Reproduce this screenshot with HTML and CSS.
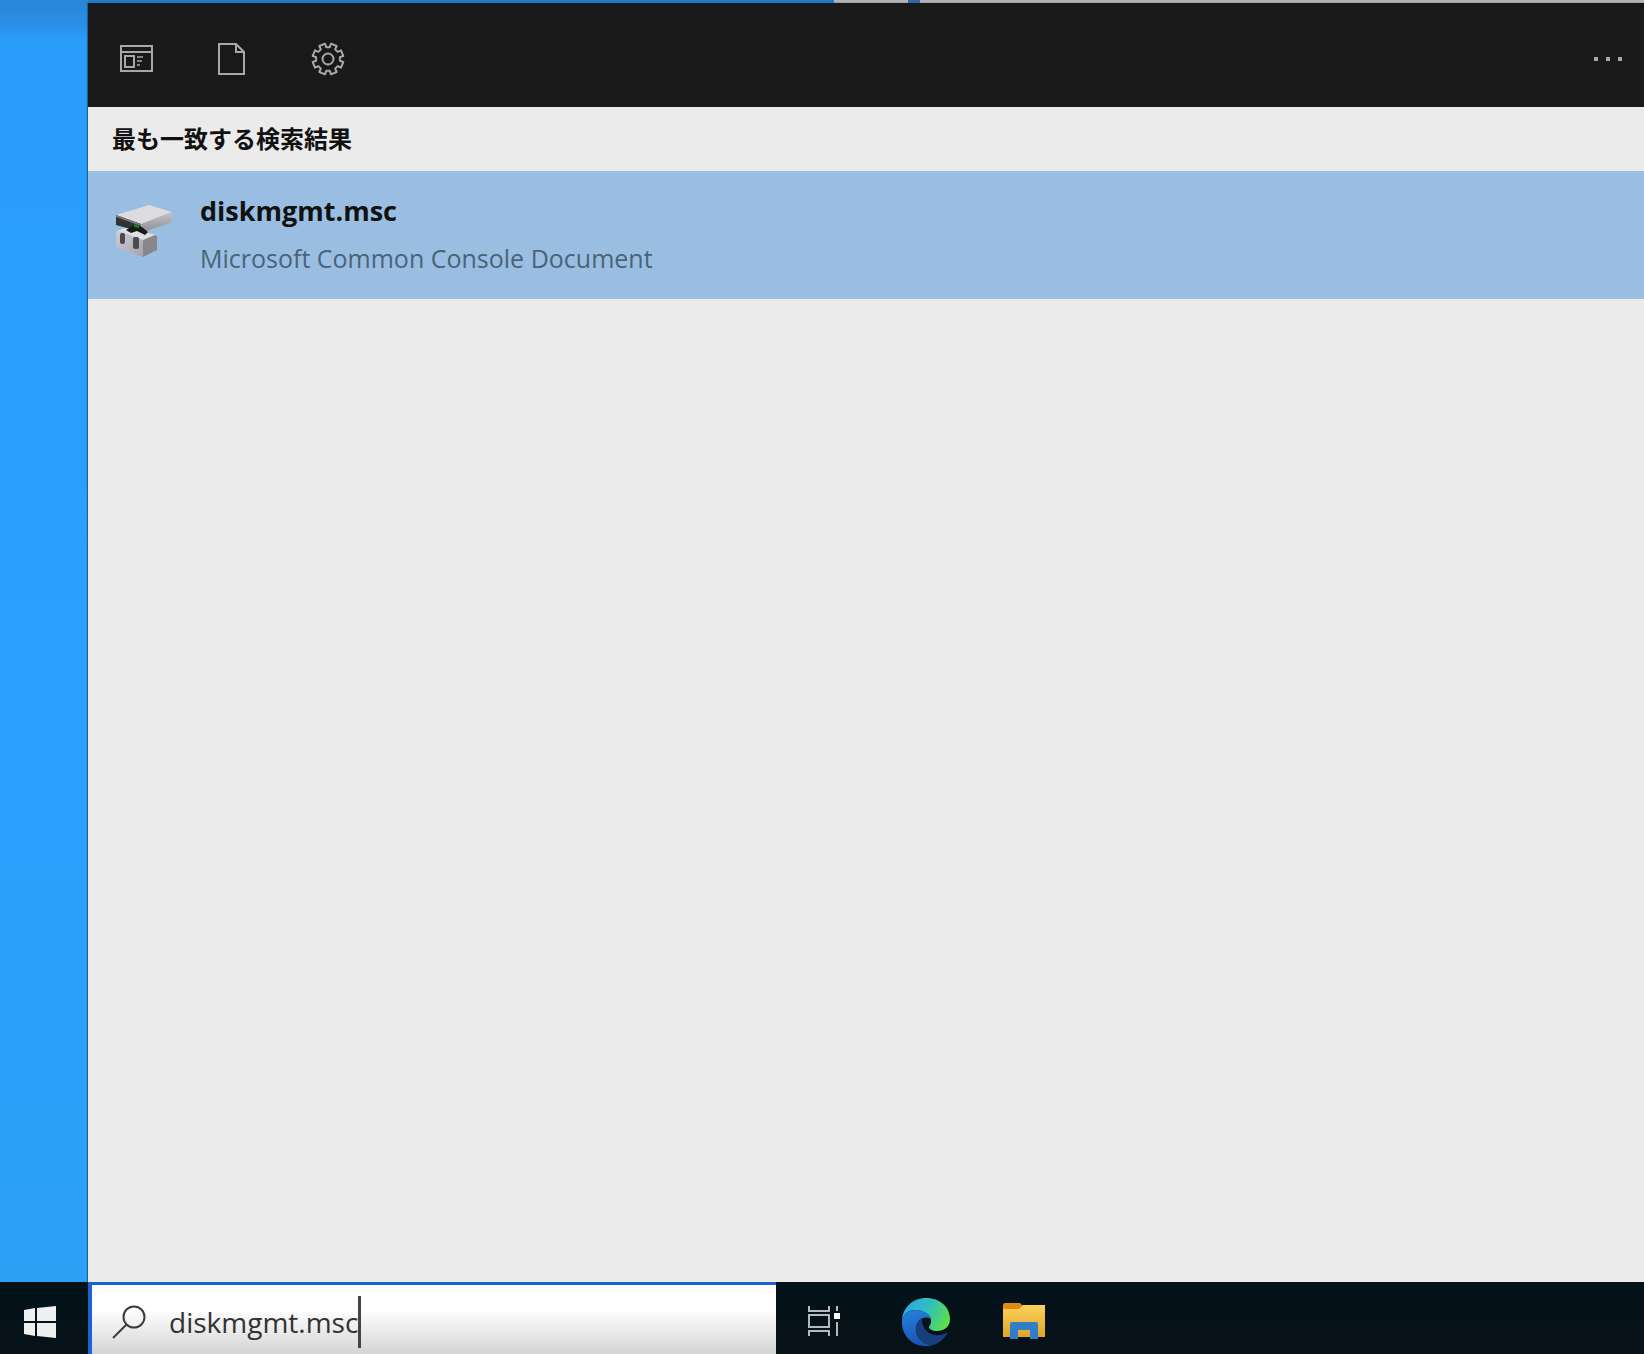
FILE: index.html
```
<!DOCTYPE html>
<html lang="ja">
<head>
    <meta charset="UTF-8">
    <meta name="viewport" content="width=device-width, initial-scale=1.0">
    <title>diskmgmt.msc</title>
    <link rel="stylesheet" href="styles.css">
</head>
<body>
    <div class="desktop">
        <div class="window-edge">
            <span class="edge-wallpaper"></span>
            <span class="edge-tab"></span>
            <span class="edge-gap"></span>
            <span class="edge-title"></span>
        </div>
        <main class="search-panel">
            <header class="filters">
                <button class="filter" type="button" aria-label="アプリ">
                    <svg width="34" height="34" viewBox="0 0 34 34" fill="none" stroke="#a8a8a8" stroke-width="2">
                        <path d="M2 4h31v25H2zM2 10h31"/>
                        <path d="M6 14h9v11H6z"/>
                        <path d="M18 15h6M18 19h5M18 23h3" stroke-width="1.6"/>
                    </svg>
                </button>
                <button class="filter" type="button" aria-label="ドキュメント">
                    <svg width="34" height="34" viewBox="0 0 34 34" fill="none" stroke="#a8a8a8" stroke-width="2">
                        <path d="M4 2h17l8 8v22H4z"/>
                        <path d="M21 2v8h8"/>
                    </svg>
                </button>
                <button class="filter" type="button" aria-label="設定">
                    <svg width="34" height="34" viewBox="-17 -17 34 34" fill="none" stroke="#a8a8a8" stroke-width="2">
                        <circle r="5.5"/>
                        <path id="gear" stroke-linejoin="round"/>
                    </svg>
                </button>
                <button class="more" type="button" aria-label="その他">
                    <svg width="30" height="6" viewBox="0 0 30 6" fill="#a8a8a8">
                        <path d="M1 1h4v4H1zM13 1h4v4h-4zM25 1h4v4h-4z"/>
                    </svg>
                </button>
            </header>
            <h2 class="group-title">最も一致する検索結果</h2>
            <button class="result" type="button">
                <svg class="result-icon" width="60" height="64" viewBox="0 0 60 64">
                    <defs>
                        <linearGradient id="side" x1="0" y1="0" x2="0" y2="1">
                            <stop offset="0" stop-color="#c6c6c8"/>
                            <stop offset="1" stop-color="#8e8e92"/>
                        </linearGradient>
                        <linearGradient id="box" x1="0" y1="0" x2="1" y2="1">
                            <stop offset="0" stop-color="#d0ced5"/>
                            <stop offset="1" stop-color="#a5a2ac"/>
                        </linearGradient>
                    </defs>
                    <path d="M2 12 35 2l23 7-31 13z" fill="#dcdce0"/>
                    <path d="M27 21 57 9q1 0 1 2v7q0 1-2 2L29 29z" fill="url(#side)"/>
                    <path d="M2 12l25 9v8L2 22z" fill="#303433"/>
                    <path d="M2 12l25 9v2L2 14z" fill="#77797a"/>
                    <path d="M3 28l8-3 32 7-14 6z" fill="#e0e0e3"/>
                    <path d="M2 30q0-3 3-2l24 9v17L2 44z" fill="url(#box)"/>
                    <path d="M29 37l12-5q2 0 2 2v13L29 54z" fill="#88888c"/>
                    <path d="M12 27l8-5 8 2 6 5-3 3-8-4-6 2z" fill="#171b19"/>
                    <path d="M20 21l5 1v3l-5-1z" fill="#1d7b24"/>
                    <rect x="6" y="30" width="5" height="11" rx="2" fill="#4a4b50"/>
                    <rect x="19" y="34" width="6" height="12" rx="2" fill="#4a4b50"/>
                </svg>
                <span class="result-text">
                    <strong class="result-name">diskmgmt.msc</strong>
                    <span class="result-type">Microsoft Common Console Document</span>
                </span>
            </button>
        </main>
    </div>

    <footer class="taskbar">
        <button class="start" type="button" aria-label="スタート">
            <svg width="34" height="34" viewBox="0 0 34 34" fill="#eef0f0">
                <path d="M1 5l11-2v13H1zM14 3l19-2v15H14zM1 18h11v13L1 29zM14 18h19v15l-19-2z"/>
            </svg>
        </button>
        <label class="search-box">
            <svg width="34" height="34" viewBox="0 0 34 34" fill="none" stroke="#3c3c3c" stroke-width="2">
                <circle cx="22" cy="12" r="10.5"/>
                <path d="M14.500 19.500 1 33"/>
            </svg>
            <span class="search-field">
                <input class="search-input" type="text" value="diskmgmt.msc" aria-label="検索">
                <span class="caret"></span>
            </span>
        </label>
        <button class="task" type="button" aria-label="タスク ビュー">
            <svg width="38" height="34" viewBox="0 0 38 34" fill="none" stroke="#b4babd" stroke-width="2">
                <path d="M2 10h20v12H2zM2 1v5h20V1M2 31v-5h20v5M30 1v5M30 17v14"/>
                <path d="M27 8h6v6h-6z" fill="#fff" stroke="none"/>
            </svg>
        </button>
        <button class="task" type="button" aria-label="Microsoft Edge">
            <svg width="50" height="50" viewBox="0 0 50 50">
                <defs>
                    <linearGradient id="edge-top" x1="0" y1="0.300" x2="1" y2="0.600">
                        <stop offset="0" stop-color="#2ba6e8"/>
                        <stop offset="0.500" stop-color="#2fbfc0"/>
                        <stop offset="1" stop-color="#5ddf45"/>
                    </linearGradient>
                    <linearGradient id="edge-body" x1="0" y1="0" x2="0.300" y2="1">
                        <stop offset="0" stop-color="#2483dc"/>
                        <stop offset="1" stop-color="#1b55b4"/>
                    </linearGradient>
                </defs>
                <path d="M1 23C2 10 12 1 25 1c14 0 24 9 24 21 0 8-6 12-13 12-5 0-8-2-8-4 0-1 2-2 2-6C30 17 22 13 14 13 7 13 3 17 1 23z" fill="url(#edge-top)"/>
                <path d="M1 23c2-7 7-10 14-10 8 0 14 4 15 9-6-4-14 0-15 9-1 8 6 16 17 17-3 1-5 1-8 1C11 49 0 38 1 23z" fill="url(#edge-body)"/>
                <path d="M21 21c-5 4-7 9-6 14 2 9 10 14 17 13 6-2 11-6 14-11 1-1 0-2-1-1-12 6-25-1-24-15z" fill="#173f80"/>
            </svg>
        </button>
        <button class="task" type="button" aria-label="エクスプローラー">
            <svg width="48" height="40" viewBox="0 0 48 40">
                <defs>
                    <linearGradient id="folder" x1="0" y1="0" x2="0" y2="1">
                        <stop offset="0" stop-color="#fbd15b"/>
                        <stop offset="1" stop-color="#e2a528"/>
                    </linearGradient>
                </defs>
                <path d="M1 4V3q0-2 2-2h15l3 3v5H1z" fill="#dc8c10"/>
                <path d="M1 7h16l4-4h22v32H1z" fill="url(#folder)"/>
                <path d="M8 37V22q0-2 2-2h24q2 0 2 2v15h-8v-9H16v9z" fill="#2f7dcc"/>
            </svg>
        </button>
    </footer>

    <script>
        // outline of the settings gear
        const teeth = 8;
        const points = [];
        for (let i = 0; i < teeth; i++) {
            [[-0.31, 12], [-0.25, 15.6], [0.25, 15.6], [0.31, 12]].forEach(([offset, radius]) => {
                const angle = (i + 0.5 + offset) * 2 * Math.PI / teeth - Math.PI / 2;
                points.push((radius * Math.cos(angle)).toFixed(2) + ' ' + (radius * Math.sin(angle)).toFixed(2));
            });
        }
        document.getElementById('gear').setAttribute('d', 'M' + points.join('L') + 'Z');
    </script>
</body>
</html>
```

FILE: styles.css
```
* {
    box-sizing: border-box;
}

body {
    margin: 0;
    min-height: 100vh;
    display: flex;
    flex-direction: column;
    font-family: "Open Sans", "Noto Sans CJK JP", sans-serif;
    color: #111;
}

button {
    margin: 0;
    padding: 0;
    border: none;
    background: none;
    font: inherit;
    color: inherit;
    cursor: pointer;
}

svg {
    display: block;
    flex: none;
}

.desktop {
    flex: 1;
    display: flex;
    flex-direction: column;
    padding-left: 88px;
    background: linear-gradient(#2a86d8 0, #2b8ee4 24px, #2a9dfb 40px, #2ba0fd 60%, #2ba0f5 100%);
}

/* bottom of the windows that show above the panel */
.window-edge {
    display: flex;
    height: 3px;
}

.edge-wallpaper {
    flex: 0 0 746px;
    background: #1f7cc6;
}

.edge-tab {
    flex: 0 0 74px;
    background: #b2b2b2;
}

.edge-gap {
    flex: 0 0 12px;
    background: #3268a8;
}

.edge-title {
    flex: 1;
    background: #b2b2b2;
}

.search-panel {
    flex: 1;
    display: flex;
    flex-direction: column;
    background: #ebebeb;
    box-shadow: -1px 0 1px #17639c;
}

.filters {
    display: flex;
    height: 104px;
    background: #191919;
}

.filter,
.more {
    display: flex;
    align-items: center;
    justify-content: center;
    width: 96px;
    padding-top: 8px;
}

.more {
    width: 72px;
    margin-left: auto;
}

.group-title {
    margin: 0;
    padding: 0 24px;
    font-size: 24px;
    line-height: 64px;
    font-weight: bold;
}

.result {
    display: flex;
    align-items: center;
    gap: 26px;
    height: 128px;
    padding: 0 26px;
    background: #99bee2;
    text-align: left;
}

.result-text {
    display: flex;
    flex-direction: column;
}

.result-name {
    font-size: 27px;
    line-height: 46px;
}

.result-type {
    font-size: 25px;
    line-height: 48px;
    color: #4a6378;
}

.taskbar {
    display: flex;
    height: 72px;
    background: linear-gradient(#021319, #081218);
}

.start,
.task {
    display: flex;
    align-items: center;
    justify-content: center;
    padding-top: 8px;
}

.start {
    width: 88px;
    padding-right: 8px;
}

.task {
    width: 100px;
}

.search-box {
    display: flex;
    align-items: center;
    gap: 23px;
    width: 688px;
    padding: 5px 20px 0;
    border: solid #1c62d0;
    border-width: 3px 0 0 4px;
    background: linear-gradient(#fff 35%, #d4d4d4);
}

.search-field {
    display: flex;
    align-items: center;
}

.search-input {
    field-sizing: content;
    padding: 0;
    border: none;
    outline: none;
    background: none;
    font: inherit;
    font-size: 28px;
    line-height: 40px;
    color: #333;
}

.caret {
    width: 3px;
    height: 52px;
    background: #444;
}
```
